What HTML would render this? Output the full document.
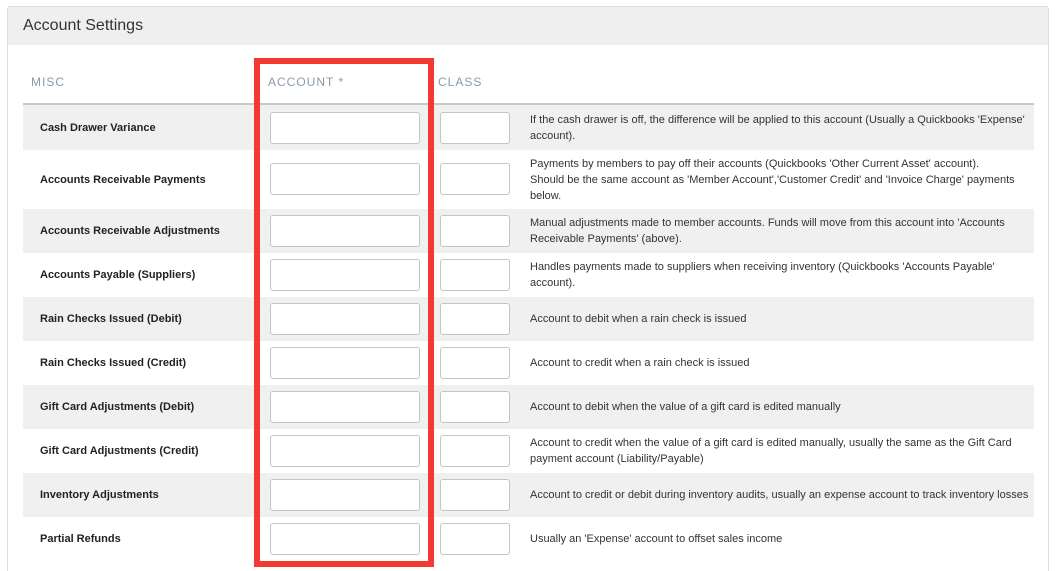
<!DOCTYPE html>
<html style="height:571px;overflow:hidden"><head><style>
*{box-sizing:border-box;margin:0;padding:0}
body{width:1056px;height:571px;background:#fff;font-family:"Liberation Sans",sans-serif;position:relative;overflow:hidden}
.panel{position:absolute;left:7px;top:6px;width:1042px;height:575px;border:1px solid #ddd;border-radius:3px}
.hd{position:absolute;left:8px;top:7px;width:1040px;height:38px;background:#efefef;font-size:16px;color:#333;padding:10px 0 0 15px}
.th{position:absolute;top:75px;font-size:12px;color:#8a9bab;letter-spacing:1px}
.hline{position:absolute;left:23px;top:103px;width:1011px;height:2px;background:#c8c8c8}
.row{position:absolute;left:23px;width:1011px}
.g{background:#f0f0f1}
.lbl{position:absolute;left:17px;font-size:11px;font-weight:bold;color:#222;margin-top:1px}
.in{position:absolute;border:1px solid #c4c4c4;border-radius:3px;background:#fff;height:32px}
.a{left:247px;width:150px}.c{left:417px;width:70px}
.d{position:absolute;left:507px;font-size:11px;line-height:16px;color:#333;width:500px;margin-top:1px}
.red{position:absolute;left:254px;top:58px;width:180px;height:509px;border:6px solid #f23a33}
</style></head><body>
<div class="panel"></div>
<div class="hd">Account Settings</div>
<div class="th" style="left:31px">MISC</div>
<div class="th" style="left:268px">ACCOUNT *</div>
<div class="th" style="left:438px">CLASS</div>
<div class="hline"></div>

<div class="row g" style="top:105px;height:45px"><div class="lbl" style="top:16px">Cash Drawer Variance</div><div class="in a" style="top:7px"></div><div class="in c" style="top:7px"></div><div class="d" style="top:6px">If the cash drawer is off, the difference will be applied to this account (Usually a Quickbooks 'Expense' account).</div></div>
<div class="row" style="top:150px;height:59px"><div class="lbl" style="top:23px">Accounts Receivable Payments</div><div class="in a" style="top:13px"></div><div class="in c" style="top:13px"></div><div class="d" style="top:5px">Payments by members to pay off their accounts (Quickbooks 'Other Current Asset' account).<br>Should be the same account as 'Member Account','Customer Credit' and 'Invoice Charge' payments below.</div></div>
<div class="row g" style="top:209px;height:44px"><div class="lbl" style="top:15px">Accounts Receivable Adjustments</div><div class="in a" style="top:6px"></div><div class="in c" style="top:6px"></div><div class="d" style="top:5px">Manual adjustments made to member accounts. Funds will move from this account into 'Accounts Receivable Payments' (above).</div></div>
<div class="row" style="top:253px;height:44px"><div class="lbl" style="top:15px">Accounts Payable (Suppliers)</div><div class="in a" style="top:6px"></div><div class="in c" style="top:6px"></div><div class="d" style="top:5px">Handles payments made to suppliers when receiving inventory (Quickbooks 'Accounts Payable' account).</div></div>
<div class="row g" style="top:297px;height:44px"><div class="lbl" style="top:15px">Rain Checks Issued (Debit)</div><div class="in a" style="top:6px"></div><div class="in c" style="top:6px"></div><div class="d" style="top:13px">Account to debit when a rain check is issued</div></div>
<div class="row" style="top:341px;height:44px"><div class="lbl" style="top:15px">Rain Checks Issued (Credit)</div><div class="in a" style="top:6px"></div><div class="in c" style="top:6px"></div><div class="d" style="top:13px">Account to credit when a rain check is issued</div></div>
<div class="row g" style="top:385px;height:44px"><div class="lbl" style="top:15px">Gift Card Adjustments (Debit)</div><div class="in a" style="top:6px"></div><div class="in c" style="top:6px"></div><div class="d" style="top:13px">Account to debit when the value of a gift card is edited manually</div></div>
<div class="row" style="top:429px;height:44px"><div class="lbl" style="top:15px">Gift Card Adjustments (Credit)</div><div class="in a" style="top:6px"></div><div class="in c" style="top:6px"></div><div class="d" style="top:5px">Account to credit when the value of a gift card is edited manually, usually the same as the Gift Card payment account (Liability/Payable)</div></div>
<div class="row g" style="top:473px;height:44px"><div class="lbl" style="top:15px">Inventory Adjustments</div><div class="in a" style="top:6px"></div><div class="in c" style="top:6px"></div><div class="d" style="top:13px;width:520px;white-space:nowrap">Account to credit or debit during inventory audits, usually an expense account to track inventory losses</div></div>
<div class="row" style="top:517px;height:44px"><div class="lbl" style="top:15px">Partial Refunds</div><div class="in a" style="top:6px"></div><div class="in c" style="top:6px"></div><div class="d" style="top:13px">Usually an 'Expense' account to offset sales income</div></div>

<div class="red"></div>
</body></html>
